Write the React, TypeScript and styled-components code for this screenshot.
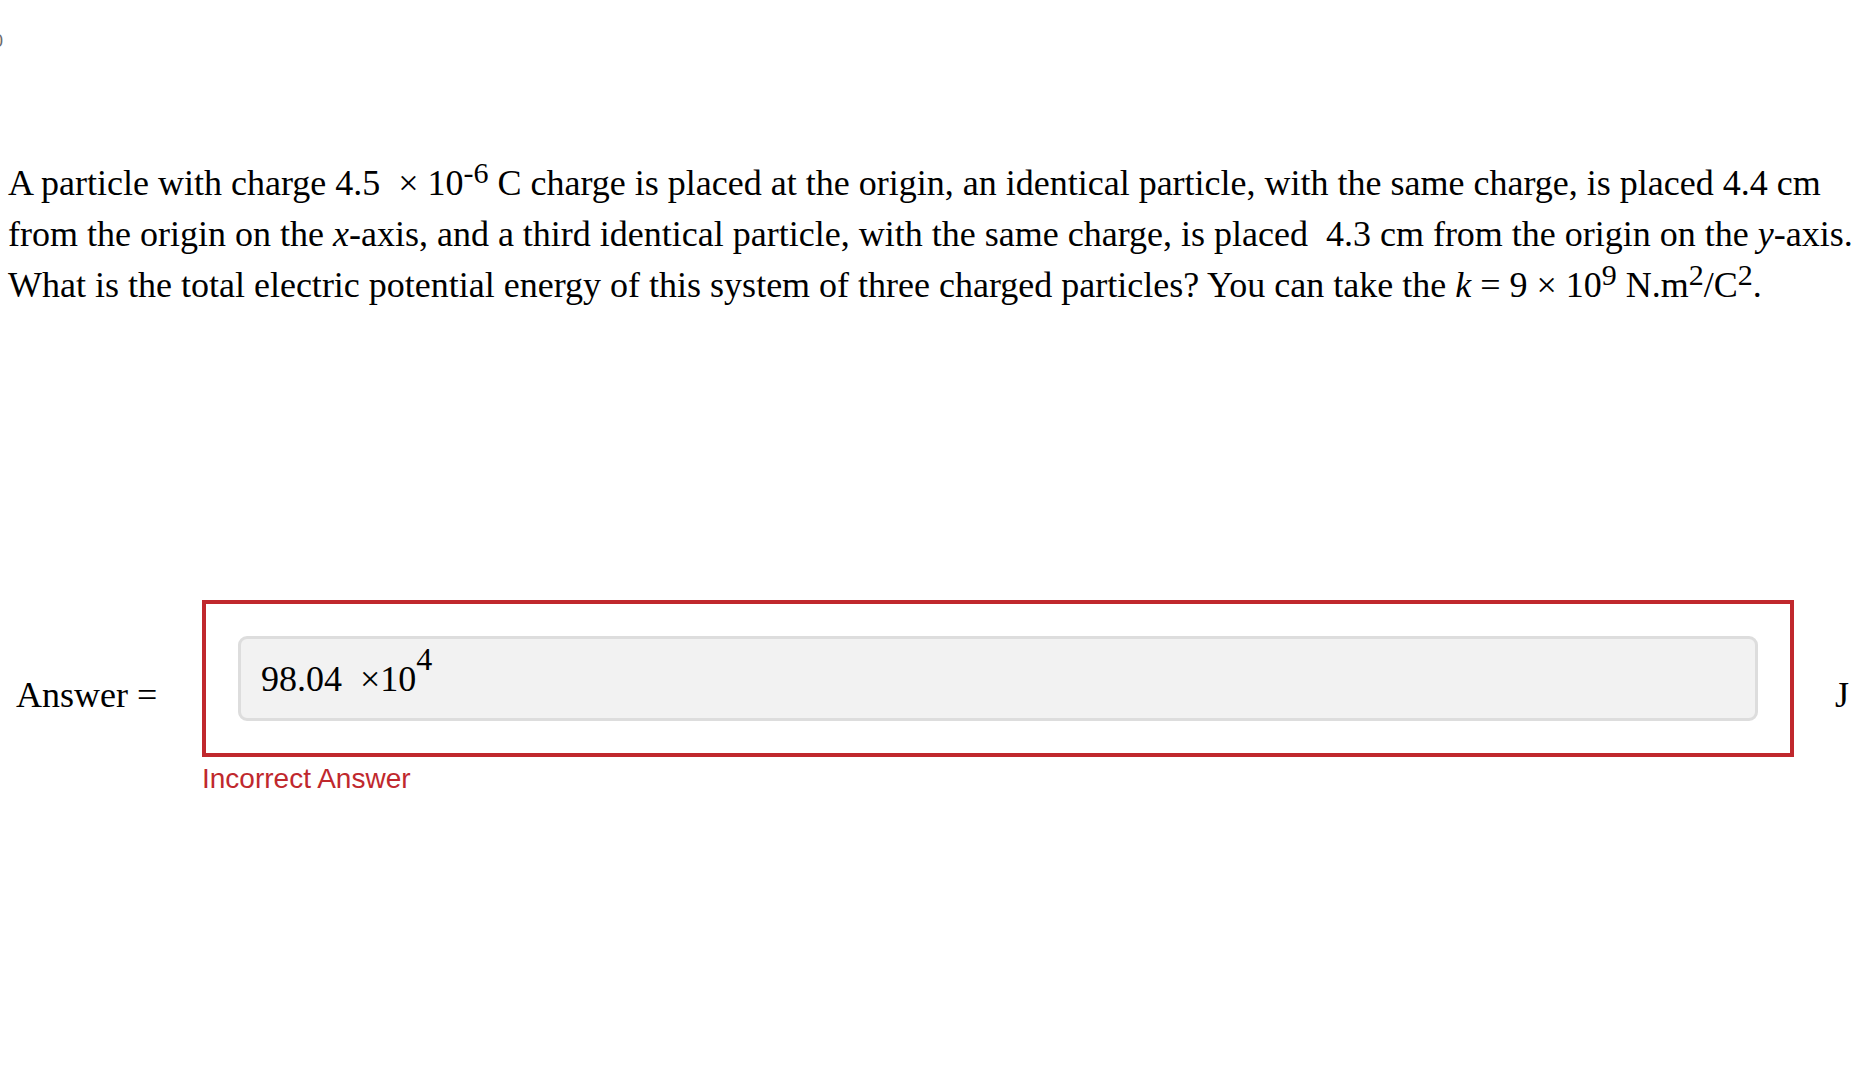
import styled, { createGlobalStyle } from "styled-components";

const GlobalStyle = createGlobalStyle`
  html, body {
    margin: 0;
    padding: 0;
    background: #ffffff;
    overflow: hidden;
  }
  body {
    font-family: "Liberation Serif", "Times New Roman", serif;
    color: #000000;
  }
`;

const Page = styled.div`
  padding: 0 8px;
  width: 1860px;
  box-sizing: border-box;
`;

const Fragment = styled.div`
  margin: 31px 0 0 -15px;
  font-family: "Liberation Sans", Arial, sans-serif;
  font-size: 18px;
  line-height: 21px;
  color: #6b6b6b;
`;

const Question = styled.p`
  margin: 106px 0 0;
  font-size: 36px;
  line-height: 51px;
  white-space: nowrap;
`;

const Sup = styled.sup<{ $size?: number; $lift?: number }>`
  font-size: ${(p) => p.$size ?? 30}px;
  line-height: 0;
  vertical-align: ${(p) => p.$lift ?? 12}px;
`;

const Var = styled.i`
  font-style: italic;
`;

const AnswerRow = styled.div`
  display: flex;
  align-items: flex-start;
  margin-top: 289px;
  padding-left: 8px;
  font-size: 36px;
  line-height: 48px;
`;

const Label = styled.div`
  flex: 0 0 186px;
  margin-top: 71px;
`;

const Field = styled.div`
  flex: 0 0 1592px;
  display: flex;
  flex-direction: column;
`;

const ErrorFrame = styled.div`
  border: 4px solid #c0282d;
  padding: 32px;
`;

const Input = styled.div`
  height: 85px;
  box-sizing: border-box;
  border: 3px solid #dddddd;
  border-radius: 9px;
  background: #f2f2f2;
  padding-left: 20px;
  display: flex;
  align-items: center;
  white-space: nowrap;
`;

const Value = styled.span`
  line-height: 48px;
`;

const Message = styled.div`
  margin-top: 6px;
  font-family: "Liberation Sans", Arial, sans-serif;
  font-size: 28px;
  line-height: 32px;
  color: #c0282d;
`;

const Unit = styled.div`
  margin: 71px 0 0 41px;
`;

export default function App() {
  return (
    <>
      <GlobalStyle />
      <Page>
        <Fragment>0</Fragment>
        <Question>
          A particle with charge 4.5{"\u00a0"} × 10<Sup>-6</Sup> C charge is
          placed at the origin, an identical particle, with the same charge, is
          placed 4.4 cm
          <br />
          from the origin on the <Var>x</Var>-axis, and a third identical
          particle, with the same charge, is placed{"\u00a0"} 4.3 cm from the
          origin on the <Var>y</Var>-axis.
          <br />
          What is the total electric potential energy of this system of three
          charged particles? You can take the <Var>k</Var> = 9 × 10
          <Sup>9</Sup> N.m<Sup>2</Sup>/C<Sup>2</Sup>.
        </Question>
        <AnswerRow>
          <Label>Answer =</Label>
          <Field>
            <ErrorFrame>
              <Input>
                <Value>
                  98.04{"\u00a0"} ×10<Sup $size={32} $lift={21}>4</Sup>
                </Value>
              </Input>
            </ErrorFrame>
            <Message>Incorrect Answer</Message>
          </Field>
          <Unit>J</Unit>
        </AnswerRow>
      </Page>
    </>
  );
}
